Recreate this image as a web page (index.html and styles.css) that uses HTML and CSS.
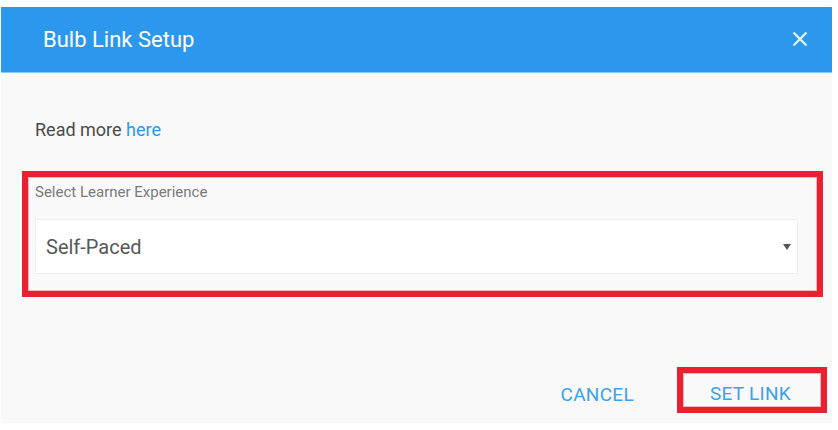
FILE: index.html
```html
<!DOCTYPE html>
<html>
<head>
<meta charset="utf-8">
<link rel="stylesheet" href="styles.css">
</head>
<body>
<div class="dialog">
  <div class="header">
    <span class="title">Bulb Link Setup</span>
    <svg class="close" width="16" height="16" viewBox="0 0 16 16"><path d="M1.5 1.5 L14.5 14.5 M14.5 1.5 L1.5 14.5" stroke="#e6f2fd" stroke-width="2.2" fill="none"/></svg>
  </div>
  <div class="content">
    <p class="readmore">Read more <a class="link">here</a></p>
    <div class="highlight field">
      <div class="label">Select Learner Experience</div>
      <div class="select">
        <span class="value">Self-Paced</span>
        <span class="arrow"></span>
      </div>
    </div>
    <div class="actions">
      <span class="btn">CANCEL</span>
      <span class="highlight btn-wrap"><span class="btn">SET LINK</span></span>
    </div>
  </div>
</div>
</body>
</html>
```

FILE: styles.css
```css
* { box-sizing: border-box; }
html, body { margin: 0; padding: 0; background: #ffffff; }
body { font-family: Roboto, "Liberation Sans", sans-serif; }
.dialog {
  margin: 7px 0 0 1px;
  width: 831px;
  height: 416px;
  display: flex;
  flex-direction: column;
  background: #f9f9f9;
}
.header {
  height: 66px;
  background: #2b98ed;
  display: flex;
  align-items: center;
  justify-content: space-between;
  padding: 0 24px 0 42px;
  border-bottom: 1px solid #8cc6f4;
}
.title { color: #fff; font-size: 22px; }
.close { display: block; margin-top: -1px; }
.content {
  flex: 1;
  display: flex;
  flex-direction: column;
  padding: 0 0 0 21px;
}
.readmore {
  margin: 44px 0 0 13px;
  font-size: 18px;
  line-height: 26px;
  color: #4a4a4a;
}
.link { color: #2b98ed; }
.highlight {
  border: 6px solid #e8202f;
  box-shadow: inset 0 0 0 1px #f5b5bb;
}
.field {
  margin-top: 28px;
  width: 801px;
  height: 126px;
  padding: 5px 19px 0 7px;
}
.label { font-size: 15px; color: #7a7a7a; line-height: 18px; margin-top: 1px; }
.select {
  margin-top: 18px;
  height: 55px;
  background: #fff;
  border: 1px solid #eeeeee;
  display: flex;
  align-items: center;
  justify-content: space-between;
  padding: 0 6px 0 10px;
}
.value { font-size: 20px; color: #585858; }
.arrow {
  width: 0; height: 0;
  border-left: 4px solid transparent;
  border-right: 4px solid transparent;
  border-top: 6px solid #555;
}
.actions {
  margin-top: auto;
  margin-bottom: 10px;
  display: flex;
  justify-content: flex-end;
  align-items: center;
  padding-right: 5px;
}
.btn { font-size: 19px; color: #3ea0ef; letter-spacing: 0.3px; line-height: 22px; }
.actions > .btn { margin-right: 43px; padding-top: 9px; }
.btn-wrap {
  width: 150px;
  height: 46px;
  display: flex;
  align-items: center;
  justify-content: center;
  padding: 8px 3px 0 0;
}
```
